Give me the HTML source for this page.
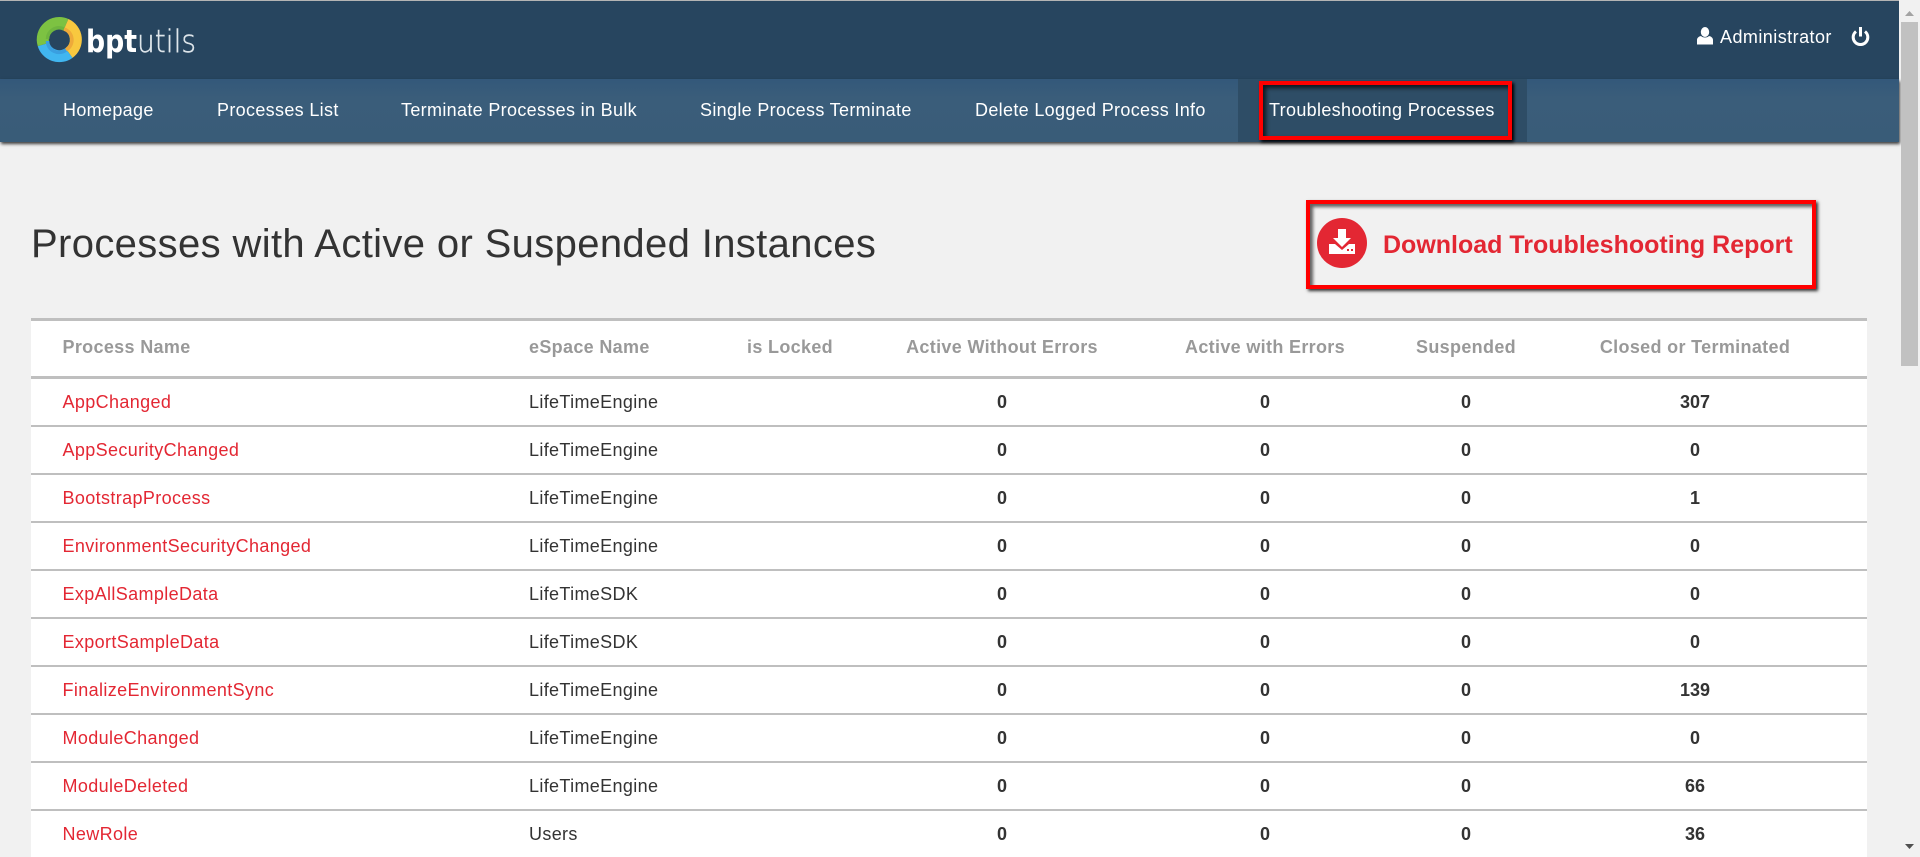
<!DOCTYPE html>
<html lang="en"><head><meta charset="utf-8"><title>Troubleshooting Processes</title>
<style>
*{box-sizing:border-box}
html,body{margin:0;padding:0;width:1920px;height:857px;overflow:hidden;background:#f1f1f1;font-family:"Liberation Sans",Arial,sans-serif}
.a{position:absolute;white-space:nowrap}
#top{left:0;top:0;width:1899px;height:79px;background:#27455f;border-top:1px solid #b4b4b4}
#nav{left:0;top:79px;width:1899px;height:63px;background:linear-gradient(#33587a 0,#3a5d7a 30%,#395c78 100%);box-shadow:1px 2px 3px rgba(0,0,0,.75)}
.n{top:79px;height:63px;line-height:63px;font-size:18px;color:#fff;letter-spacing:.33px}
#act{left:1238px;top:79px;width:289px;height:63px;background:#2e4d66}
#rb{left:1259px;top:81px;width:253px;height:59px;border:4px solid #f00;box-shadow:2px 2px 3px #000,inset 3px 3px 4px rgba(0,0,0,.7)}
#dl{left:1306px;top:200px;width:510px;height:89px;border:4px solid #f00;box-shadow:2px 2px 3px rgba(0,0,0,.8),inset 3px 3px 3px rgba(0,0,0,.6)}
h1{margin:0;font-weight:400;font-size:40px;line-height:46px;color:#333;left:31px;top:221px;letter-spacing:.36px}
#tb{left:31px;top:318px;width:1836px;height:539px;background:#fff;border-top:3px solid #bfbfbf}
.l{left:31px;width:1836px;background:#bfbfbf}
.h,.c,.v,.p{font-size:18px;line-height:22px}
.h{font-weight:700;color:#999;top:336px;letter-spacing:.33px}
.c{color:#333;letter-spacing:.35px}
.p{color:#e32733;left:62.500px;letter-spacing:.37px}
.v{color:#333;font-weight:700;text-align:center;width:120px}
.t{transform:translateX(-50%);text-align:center}
</style></head><body>
<div class="a" id="top"></div>
<div class="a" id="nav"></div>
<svg class="a" style="left:30px;top:12px" width="180" height="56" viewBox="30 12 180 56">
<g fill="none" stroke-width="12">
<path d="M43.500 44.500A16.500 16.500 0 0 1 66 24.500" stroke="#7dc242"/>
<path d="M66 24.500A16.500 16.500 0 0 1 69 53" stroke="#f8c83f"/>
<path d="M43.500 44.500A16.500 16.500 0 0 0 69 53" stroke="#41b6f0"/>
</g>
<g fill="none" stroke-width="3.500">
<path d="M47.500 39A11.500 11.500 0 0 1 64 29" stroke="#6fb53f"/>
<path d="M64 29A11.500 11.500 0 0 1 66 50" stroke="#eeaa3a"/>
<path d="M47.500 41A11.500 11.500 0 0 0 66 50" stroke="#3a9fe0"/>
</g>
<text x="86" y="52" font-family="DejaVu Sans,sans-serif" font-weight="700" font-size="31" fill="#fff" textLength="51" lengthAdjust="spacingAndGlyphs">bpt</text>
<text x="137" y="52" font-family="DejaVu Sans,sans-serif" font-weight="300" font-size="31" fill="#dfe6eb" stroke="#dfe6eb" stroke-width=".4" textLength="59" lengthAdjust="spacingAndGlyphs">utils</text>
</svg>
<svg class="a" style="left:1697px;top:27px" width="16" height="18" viewBox="0 0 16 18"><ellipse cx="8" cy="5" rx="4.200" ry="5" fill="#fff"/><path d="M0 17.500V13C0 11 1.500 9.500 4 9C5.500 11 10.500 11 12 9C14.500 9.500 16 11 16 13V17.500Z" fill="#fff"/></svg>
<div class="a" style="left:1720px;top:26px;font-size:18px;line-height:22px;color:#fff;letter-spacing:.45px">Administrator</div>
<svg class="a" style="left:1851px;top:26px" width="19" height="20" viewBox="0 0 19 20"><path d="M5 5.500A7.300 7.300 0 1 0 14 5.500" fill="none" stroke="#fff" stroke-width="3"/><path d="M9.500 1V10.500" stroke="#fff" stroke-width="3"/></svg>

<div class="a n" style="left:63px">Homepage</div>
<div class="a n" style="left:217px">Processes List</div>
<div class="a n" style="left:401px">Terminate Processes in Bulk</div>
<div class="a n" style="left:700px">Single Process Terminate</div>
<div class="a n" style="left:975px">Delete Logged Process Info</div>
<div class="a" id="act"></div>
<div class="a n" style="left:1269px">Troubleshooting Processes</div>
<div class="a" id="rb"></div>

<h1 class="a">Processes with Active or Suspended Instances</h1>
<div class="a" id="dl"></div>
<svg class="a" style="left:1317px;top:218px" width="50" height="50" viewBox="0 0 50 50"><circle cx="25" cy="25" r="25" fill="#e32733"/><path d="M21 11H29V20H34L25 29L16 20H21Z" fill="#fff"/><path d="M12 26H18L25 32L32 26H38V36H12Z" fill="#fff"/><rect x="30" y="31" width="2" height="2" fill="#e32733"/><rect x="34" y="31" width="2" height="2" fill="#e32733"/></svg>
<div class="a" style="left:1383px;top:230px;font-size:25px;line-height:30px;font-weight:700;color:#e32733">Download Troubleshooting Report</div>

<div class="a" id="tb"></div>
<div class="a h" style="left:62.500px">Process Name</div>
<div class="a h" style="left:529px">eSpace Name</div>
<div class="a h" style="left:747px">is Locked</div>
<div class="a h t" style="left:1002px">Active Without Errors</div>
<div class="a h t" style="left:1265px">Active with Errors</div>
<div class="a h t" style="left:1466px">Suspended</div>
<div class="a h t" style="left:1695px">Closed or Terminated</div>
<div class="a l" style="top:376px;height:3px"></div>
<div class="a l" style="top:425px;height:2px"></div>
<div class="a l" style="top:473px;height:2px"></div>
<div class="a l" style="top:521px;height:2px"></div>
<div class="a l" style="top:569px;height:2px"></div>
<div class="a l" style="top:617px;height:2px"></div>
<div class="a l" style="top:665px;height:2px"></div>
<div class="a l" style="top:713px;height:2px"></div>
<div class="a l" style="top:761px;height:2px"></div>
<div class="a l" style="top:809px;height:2px"></div>

<div class="a p" style="top:391px">AppChanged</div><div class="a c" style="left:529px;top:391px">LifeTimeEngine</div><div class="a v" style="left:942px;top:391px">0</div><div class="a v" style="left:1205px;top:391px">0</div><div class="a v" style="left:1406px;top:391px">0</div><div class="a v" style="left:1635px;top:391px">307</div>
<div class="a p" style="top:439px">AppSecurityChanged</div><div class="a c" style="left:529px;top:439px">LifeTimeEngine</div><div class="a v" style="left:942px;top:439px">0</div><div class="a v" style="left:1205px;top:439px">0</div><div class="a v" style="left:1406px;top:439px">0</div><div class="a v" style="left:1635px;top:439px">0</div>
<div class="a p" style="top:487px">BootstrapProcess</div><div class="a c" style="left:529px;top:487px">LifeTimeEngine</div><div class="a v" style="left:942px;top:487px">0</div><div class="a v" style="left:1205px;top:487px">0</div><div class="a v" style="left:1406px;top:487px">0</div><div class="a v" style="left:1635px;top:487px">1</div>
<div class="a p" style="top:535px">EnvironmentSecurityChanged</div><div class="a c" style="left:529px;top:535px">LifeTimeEngine</div><div class="a v" style="left:942px;top:535px">0</div><div class="a v" style="left:1205px;top:535px">0</div><div class="a v" style="left:1406px;top:535px">0</div><div class="a v" style="left:1635px;top:535px">0</div>
<div class="a p" style="top:583px">ExpAllSampleData</div><div class="a c" style="left:529px;top:583px">LifeTimeSDK</div><div class="a v" style="left:942px;top:583px">0</div><div class="a v" style="left:1205px;top:583px">0</div><div class="a v" style="left:1406px;top:583px">0</div><div class="a v" style="left:1635px;top:583px">0</div>
<div class="a p" style="top:631px">ExportSampleData</div><div class="a c" style="left:529px;top:631px">LifeTimeSDK</div><div class="a v" style="left:942px;top:631px">0</div><div class="a v" style="left:1205px;top:631px">0</div><div class="a v" style="left:1406px;top:631px">0</div><div class="a v" style="left:1635px;top:631px">0</div>
<div class="a p" style="top:679px">FinalizeEnvironmentSync</div><div class="a c" style="left:529px;top:679px">LifeTimeEngine</div><div class="a v" style="left:942px;top:679px">0</div><div class="a v" style="left:1205px;top:679px">0</div><div class="a v" style="left:1406px;top:679px">0</div><div class="a v" style="left:1635px;top:679px">139</div>
<div class="a p" style="top:727px">ModuleChanged</div><div class="a c" style="left:529px;top:727px">LifeTimeEngine</div><div class="a v" style="left:942px;top:727px">0</div><div class="a v" style="left:1205px;top:727px">0</div><div class="a v" style="left:1406px;top:727px">0</div><div class="a v" style="left:1635px;top:727px">0</div>
<div class="a p" style="top:775px">ModuleDeleted</div><div class="a c" style="left:529px;top:775px">LifeTimeEngine</div><div class="a v" style="left:942px;top:775px">0</div><div class="a v" style="left:1205px;top:775px">0</div><div class="a v" style="left:1406px;top:775px">0</div><div class="a v" style="left:1635px;top:775px">66</div>
<div class="a p" style="top:823px">NewRole</div><div class="a c" style="left:529px;top:823px">Users</div><div class="a v" style="left:942px;top:823px">0</div><div class="a v" style="left:1205px;top:823px">0</div><div class="a v" style="left:1406px;top:823px">0</div><div class="a v" style="left:1635px;top:823px">36</div>

<div class="a" style="left:1901px;top:22px;width:17px;height:344px;background:#c1c1c1"></div>
<svg class="a" style="left:1904px;top:10px" width="11" height="7"><path d="M5.500 1L10 6H1Z" fill="#a3a3a3"/></svg>
<svg class="a" style="left:1904px;top:843px" width="11" height="7"><path d="M1 1H10L5.500 6Z" fill="#505050"/></svg>
</body></html>
